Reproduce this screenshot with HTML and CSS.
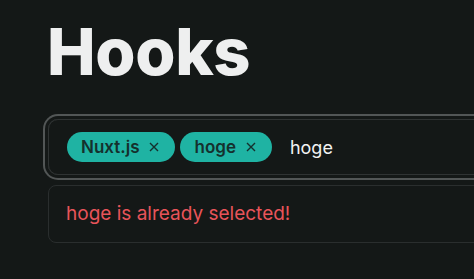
FILE: index.html
```html
<!DOCTYPE html>
<html lang="en">
<head>
<meta charset="utf-8">
<title>Hooks</title>
<link rel="stylesheet" href="styles.css">
</head>
<body>
<main class="page">
  <h1 class="title">Hooks</h1>
  <div class="tag-input">
    <span class="tag">Nuxt.js<svg class="x" viewBox="0 0 10 10" width="10" height="10"><path d="M1 1L9 9M9 1L1 9"/></svg></span>
    <span class="tag">hoge<svg class="x" viewBox="0 0 10 10" width="10" height="10"><path d="M1 1L9 9M9 1L1 9"/></svg></span>
    <span class="typed">hoge</span>
  </div>
  <div class="error">hoge is already selected!</div>
</main>
</body>
</html>
```
FILE: styles.css
```css
html, body {
  margin: 0;
  padding: 0;
  background: #141817;
  overflow: hidden;
}
body {
  font-family: Inter, "Noto Sans", sans-serif;
  width: 474px;
  height: 279px;
}
.page {
  padding: 20px 0 0 48px;
  width: 520px;
}
.title {
  margin: 0 0 35px -1px;
  font-size: 65px;
  line-height: 64px;
  font-weight: 800;
  letter-spacing: -0.005em;
  color: #eeefef;
}
.tag-input {
  display: flex;
  align-items: center;
  gap: 5px;
  height: 54px;
  padding: 0 18px;
  border: 1px solid #2f3333;
  border-radius: 10px;
  box-shadow: 0 0 0 3px #141817, 0 0 0 5px #525656;
}
.tag {
  display: inline-flex;
  align-items: center;
  gap: 10px;
  height: 30px;
  padding: 0 16px 0 14px;
  border-radius: 15px;
  background: #1fb3a3;
  color: #15302d;
  font-size: 17px;
  font-weight: 600;
}
.x {
  stroke: #15302d;
  stroke-width: 1.4;
  fill: none;
}
.typed {
  margin-left: 13px;
  color: #f2f3f3;
  font-size: 18px;
}
.error {
  margin-top: 10px;
  padding: 16px 17px;
  border: 1px solid #2a2e2e;
  border-radius: 8px;
  color: #e8545a;
  font-size: 19px;
  line-height: 24px;
}
```
